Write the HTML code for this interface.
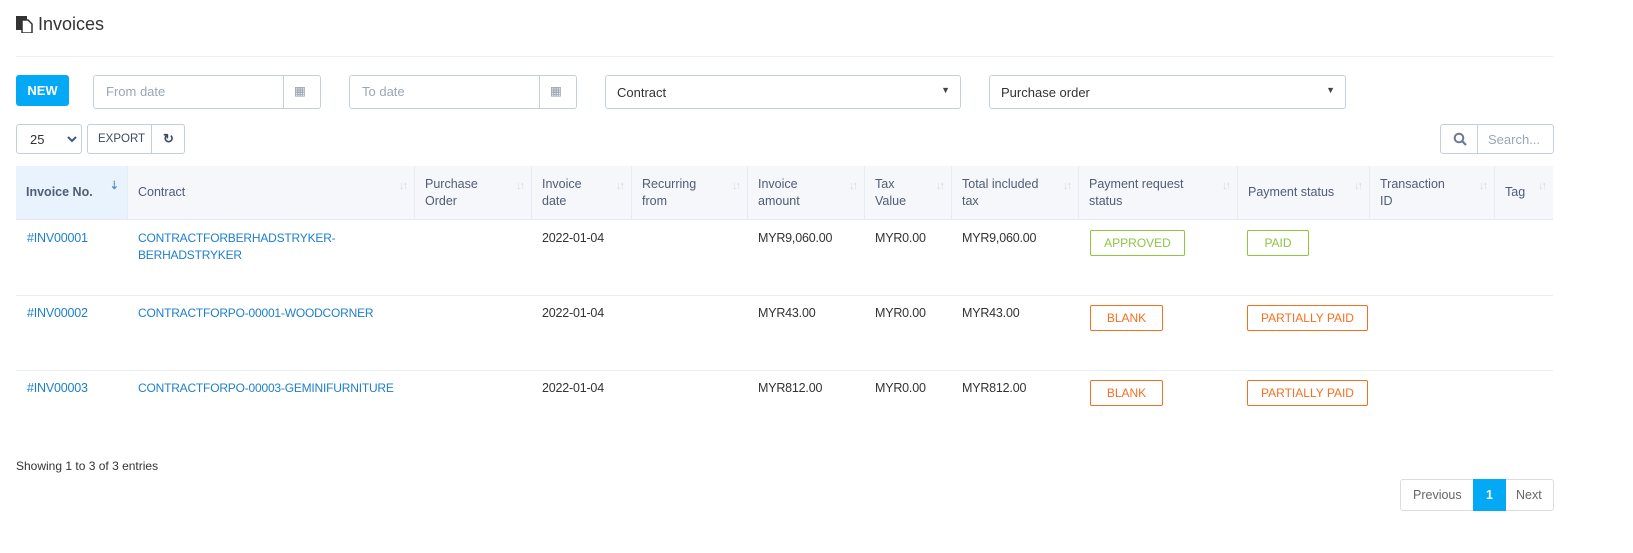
<!DOCTYPE html>
<html><head><meta charset="utf-8"><style>
*{box-sizing:border-box;margin:0;padding:0}
html,body{width:1633px;height:553px;overflow:hidden;background:#fff}
body{font-family:"Liberation Sans",sans-serif;font-size:12.5px;color:#333}
#w{position:relative;width:1633px;height:553px;overflow:hidden}
.a{position:absolute}
.box{position:absolute;border:1px solid #c5cfdc;border-radius:3px;background:#fff}
.ph{color:#9aa6b6;font-size:13px}
.hd{position:absolute;top:166px;height:53px;background:#f5f7fa;border-right:1px solid #e6ecf3;color:#4f5d75;font-size:12.5px;line-height:17px;display:flex;align-items:center;padding-left:10px}
.sort{position:absolute;right:8px;top:12px;color:#d6dce4;font-size:11px;letter-spacing:-2px}
.lk{color:#1d7fcc;letter-spacing:-0.2px}
.cell{position:absolute;font-size:12.5px;line-height:17px;letter-spacing:-0.2px}
.bd{position:absolute;border:1px solid;border-radius:2px;height:26px;line-height:24px;text-align:center;font-size:12px}
.g{border-color:#8cc63f;color:#8cc63f}
.o{border-color:#f37021;color:#f37021}
.line{position:absolute;left:16px;width:1537px;height:1px;background:#e9eef4}
</style></head><body><div id="w">
<svg class="a" style="left:16px;top:15px" width="17" height="18" viewBox="0 0 17 18"><rect x="0" y="1" width="11" height="14" fill="#333"/><path d="M6 5h6l4 4v9H6z" fill="#fff" stroke="#333" stroke-width="1.5"/></svg>
<div class="a" style="left:38px;top:14px;font-size:18px;color:#333">Invoices</div>
<div class="line" style="top:56px;background:#eceff3"></div>

<div class="a" style="left:16px;top:75px;width:53px;height:31px;background:#03a9f4;border-radius:3px;color:#fff;font-weight:bold;font-size:13px;text-align:center;line-height:31px">NEW</div>
<div class="box" style="left:93px;top:75px;width:228px;height:34px"><span class="a ph" style="left:12px;top:8px">From date</span><div class="a" style="left:189px;top:0;width:1px;height:32px;background:#c5cfdc"></div><span class="a" style="left:200px;top:7px;color:#8c96a5">▦</span></div>
<div class="box" style="left:349px;top:75px;width:228px;height:34px"><span class="a ph" style="left:12px;top:8px">To date</span><div class="a" style="left:189px;top:0;width:1px;height:32px;background:#c5cfdc"></div><span class="a" style="left:200px;top:7px;color:#8c96a5">▦</span></div>
<div class="box" style="left:605px;top:75px;width:356px;height:34px"><span class="a" style="left:11px;top:9px;color:#333;font-size:13px">Contract</span><span class="a" style="right:10px;top:9px;font-size:9px;color:#444">▼</span></div>
<div class="box" style="left:989px;top:75px;width:357px;height:34px"><span class="a" style="left:11px;top:9px;color:#333;font-size:13px">Purchase order</span><span class="a" style="right:10px;top:9px;font-size:9px;color:#444">▼</span></div>

<div class="box" style="left:16px;top:124px;width:66px;height:30px"><span class="a" style="left:13px;top:7px;font-size:13px;color:#333">25</span><svg class="a" style="left:50px;top:11px" width="10" height="7" viewBox="0 0 10 7"><path d="M1 1l4 4 4-4" fill="none" stroke="#3b5a8c" stroke-width="2"/></svg></div>
<div class="box" style="left:87px;top:124px;width:98px;height:30px"><span class="a" style="left:10px;top:8px;font-size:11.5px;color:#3c4b64">EXPORT</span><div class="a" style="left:63px;top:0;width:1px;height:28px;background:#c5cfdc"></div><span class="a" style="left:75px;top:6px;font-size:13px;color:#3c4b64;font-weight:bold">↻</span></div>
<div class="box" style="left:1440px;top:124px;width:114px;height:30px"><svg class="a" style="left:12px;top:7px" width="14" height="14" viewBox="0 0 14 14"><circle cx="6" cy="6" r="4.3" fill="none" stroke="#6b7a90" stroke-width="2"/><path d="M9 9l4 4" stroke="#6b7a90" stroke-width="2.2"/></svg><div class="a" style="left:36px;top:0;width:1px;height:28px;background:#c5cfdc"></div><span class="a ph" style="left:47px;top:7px">Search...</span></div>

<div class="hd" style="left:16px;width:112px;background:#e8f3fd;font-weight:bold">Invoice No.<span class="sort" style="color:#5b93d1;letter-spacing:0">⇣</span></div>
<div class="hd" style="left:128px;width:287px">Contract<span class="sort">↓↑</span></div>
<div class="hd" style="left:415px;width:117px">Purchase<br>Order<span class="sort">↓↑</span></div>
<div class="hd" style="left:532px;width:100px">Invoice<br>date<span class="sort">↓↑</span></div>
<div class="hd" style="left:632px;width:116px">Recurring<br>from<span class="sort">↓↑</span></div>
<div class="hd" style="left:748px;width:117px">Invoice<br>amount<span class="sort">↓↑</span></div>
<div class="hd" style="left:865px;width:87px">Tax<br>Value<span class="sort">↓↑</span></div>
<div class="hd" style="left:952px;width:127px">Total included<br>tax<span class="sort">↓↑</span></div>
<div class="hd" style="left:1079px;width:159px">Payment request<br>status<span class="sort">↓↑</span></div>
<div class="hd" style="left:1238px;width:132px">Payment status<span class="sort">↓↑</span></div>
<div class="hd" style="left:1370px;width:125px">Transaction<br>ID<span class="sort">↓↑</span></div>
<div class="hd" style="left:1495px;width:58px;border-right:none">Tag<span class="sort">↓↑</span></div>
<div class="line" style="top:219px;background:#e3eaf2"></div>

<div class="cell lk" style="left:27px;top:230px">#INV00001</div>
<div class="cell lk" style="left:138px;top:230px;font-size:12px">CONTRACTFORBERHADSTRYKER-<br>BERHADSTRYKER</div>
<div class="cell" style="left:542px;top:230px">2022-01-04</div>
<div class="cell" style="left:758px;top:230px">MYR9,060.00</div>
<div class="cell" style="left:875px;top:230px">MYR0.00</div>
<div class="cell" style="left:962px;top:230px">MYR9,060.00</div>
<div class="bd g" style="left:1090px;top:230px;width:95px">APPROVED</div>
<div class="bd g" style="left:1247px;top:230px;width:62px">PAID</div>
<div class="line" style="top:295px"></div>

<div class="cell lk" style="left:27px;top:305px">#INV00002</div>
<div class="cell lk" style="left:138px;top:305px;font-size:12px">CONTRACTFORPO-00001-WOODCORNER</div>
<div class="cell" style="left:542px;top:305px">2022-01-04</div>
<div class="cell" style="left:758px;top:305px">MYR43.00</div>
<div class="cell" style="left:875px;top:305px">MYR0.00</div>
<div class="cell" style="left:962px;top:305px">MYR43.00</div>
<div class="bd o" style="left:1090px;top:305px;width:73px">BLANK</div>
<div class="bd o" style="left:1247px;top:305px;width:121px">PARTIALLY PAID</div>
<div class="line" style="top:370px"></div>

<div class="cell lk" style="left:27px;top:380px">#INV00003</div>
<div class="cell lk" style="left:138px;top:380px;font-size:12px">CONTRACTFORPO-00003-GEMINIFURNITURE</div>
<div class="cell" style="left:542px;top:380px">2022-01-04</div>
<div class="cell" style="left:758px;top:380px">MYR812.00</div>
<div class="cell" style="left:875px;top:380px">MYR0.00</div>
<div class="cell" style="left:962px;top:380px">MYR812.00</div>
<div class="bd o" style="left:1090px;top:380px;width:73px">BLANK</div>
<div class="bd o" style="left:1247px;top:380px;width:121px">PARTIALLY PAID</div>

<div class="a" style="left:16px;top:459px;font-size:12px;color:#333">Showing 1 to 3 of 3 entries</div>
<div class="a" style="left:1400px;top:479px;width:154px;height:32px;border:1px solid #ddd;border-radius:3px;font-size:12.5px;color:#666">
<span class="a" style="left:12px;top:8px">Previous</span>
<div class="a" style="left:72px;top:-1px;width:33px;height:32px;background:#03a9f4;color:#fff;font-weight:bold;text-align:center;line-height:32px">1</div>
<span class="a" style="left:115px;top:8px">Next</span></div>
</div></body></html>
